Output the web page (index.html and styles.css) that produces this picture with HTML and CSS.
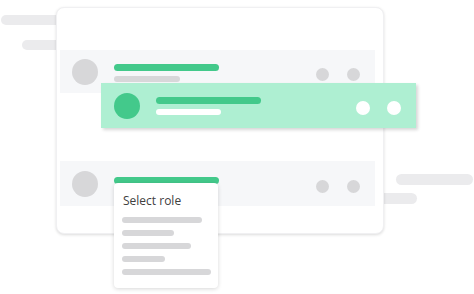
FILE: index.html
```html
<!DOCTYPE html>
<html>
<head>
<meta charset="utf-8">
<link rel="stylesheet" href="styles.css">
</head>
<body>
<div class="canvas">
  <div class="deco deco-a"></div>
  <div class="deco deco-b"></div>
  <div class="deco deco-c"></div>
  <div class="deco deco-d"></div>

  <div class="card">
    <div class="row row-first">
      <div class="avatar"></div>
      <div class="lines">
        <div class="line green w105"></div>
        <div class="line gray w66"></div>
      </div>
      <div class="dots">
        <div class="dot"></div>
        <div class="dot"></div>
      </div>
    </div>
    <div class="row row-second">
      <div class="avatar"></div>
      <div class="lines">
        <div class="line green w105"></div>
      </div>
      <div class="dots">
        <div class="dot"></div>
        <div class="dot"></div>
      </div>
    </div>
  </div>

  <div class="row row-active">
    <div class="avatar"></div>
    <div class="lines">
      <div class="line green w105"></div>
      <div class="line white w65"></div>
    </div>
    <div class="dots">
      <div class="dot"></div>
      <div class="dot"></div>
    </div>
  </div>

  <div class="menu">
    <div class="menu-title">Select role</div>
    <div class="menu-items">
      <div class="item w80"></div>
      <div class="item w52"></div>
      <div class="item w69"></div>
      <div class="item w43"></div>
      <div class="item w89"></div>
    </div>
  </div>
</div>
</body>
</html>
```

FILE: styles.css
```css
html, body {
  margin: 0;
  padding: 0;
  background: #ffffff;
}

.canvas {
  position: relative;
  width: 474px;
  height: 294px;
  overflow: hidden;
  font-family: "Open Sans", "Liberation Sans", sans-serif;
}

.deco {
  position: absolute;
  background: #ebebed;
  border-radius: 6px;
}
.deco-a { left: 1px; top: 15px; width: 80px; height: 10px; }
.deco-b { left: 22px; top: 40px; width: 60px; height: 10px; }
.deco-c { left: 396px; top: 174px; width: 77px; height: 11px; }
.deco-d { left: 360px; top: 193px; width: 57px; height: 11px; }

.card {
  position: absolute;
  left: 56px;
  top: 7px;
  width: 328px;
  height: 227px;
  box-sizing: border-box;
  background: #ffffff;
  border: 1px solid #f0f0f2;
  border-radius: 8px;
  box-shadow: 0 1px 3px rgba(0, 0, 0, 0.14);
  padding: 42px 8px 0 3px;
  display: flex;
  flex-direction: column;
  gap: 68px;
}

.row {
  display: flex;
  align-items: center;
  width: 315px;
  box-sizing: border-box;
  padding: 0 15px 0 12px;
  background: #f6f7f9;
}
.row-first { height: 43px; }
.row-second { height: 45px; }

.row-active {
  position: absolute;
  left: 101px;
  top: 83px;
  height: 45px;
  padding-left: 13px;
  background: #aeefd2;
  box-shadow: 2px 2px 3px rgba(0, 0, 0, 0.16);
}

.avatar {
  width: 26px;
  height: 26px;
  border-radius: 50%;
  background: #d7d7d9;
  flex: none;
}
.row-active .avatar { background: #43c98b; }

.lines {
  margin-left: 16px;
  display: flex;
  flex-direction: column;
  gap: 5px;
  padding-top: 2px;
  flex: 1;
}
.row-second .lines { padding-top: 0; margin-bottom: 6px; }
.row-active .lines { padding-top: 0; }

.line {
  height: 7px;
  border-radius: 4px;
}
.line.green { background: #43c98b; }
.line.gray { background: #d7d7d9; height: 6px; }
.line.white { background: #ffffff; height: 6px; }

.w105 { width: 105px; }
.w66 { width: 66px; }
.w65 { width: 65px; }

.dots {
  display: flex;
  gap: 18px;
  margin-top: 5px;
}
.dot {
  width: 13px;
  height: 13px;
  border-radius: 50%;
  background: #d7d7d9;
}
.row-active .dots { gap: 17px; margin-top: 4px; }
.row-active .dot {
  width: 14px;
  height: 14px;
  background: #ffffff;
}

.menu {
  position: absolute;
  left: 114px;
  top: 183px;
  width: 104px;
  height: 105px;
  box-sizing: border-box;
  background: #ffffff;
  border-radius: 4px;
  box-shadow: 0 1px 4px rgba(0, 0, 0, 0.16);
  padding: 10px 8px 0 8px;
}

.menu-title {
  font-size: 12px;
  line-height: 16px;
  color: #404040;
  margin-left: 1px;
}

.menu-items {
  margin-top: 8px;
  display: flex;
  flex-direction: column;
  gap: 7px;
}
.item {
  height: 6px;
  border-radius: 3px;
  background: #d7d7d9;
}
.w80 { width: 80px; }
.w52 { width: 52px; }
.w69 { width: 69px; }
.w43 { width: 43px; }
.w89 { width: 89px; }
```
